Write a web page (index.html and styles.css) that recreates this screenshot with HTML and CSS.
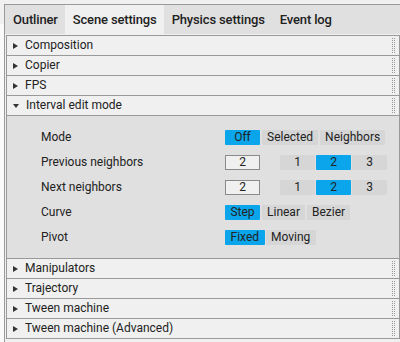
FILE: index.html
```html
<!DOCTYPE html>
<html>
<head>
<meta charset="utf-8">
<link rel="stylesheet" href="styles.css">
</head>
<body>
<div class="app">
  <div class="gutter"></div>
  <div class="frame">
    <div class="tabs">
      <div class="tab">Outliner</div>
      <div class="tab active">Scene settings</div>
      <div class="tab">Physics settings</div>
      <div class="tab">Event log</div>
    </div>
    <div class="panel">
      <div class="sec"><span class="tri"></span><span class="title">Composition</span><span class="grip"></span></div>
      <div class="sec"><span class="tri"></span><span class="title">Copier</span><span class="grip"></span></div>
      <div class="sec"><span class="tri"></span><span class="title">FPS</span><span class="grip"></span></div>
      <div class="sec"><span class="tri down"></span><span class="title">Interval edit mode</span><span class="grip"></span></div>
      <div class="body">
        <div class="label">Mode</div>
        <div class="seg">
          <span class="btn on">Off</span><span class="btn">Selected</span><span class="btn">Neighbors</span>
        </div>
        <div class="label">Previous neighbors</div>
        <div class="numrow">
          <span class="num">2</span>
          <div class="seg tight"><span class="btn">1</span><span class="btn on">2</span><span class="btn">3</span></div>
        </div>
        <div class="label">Next neighbors</div>
        <div class="numrow">
          <span class="num">2</span>
          <div class="seg tight"><span class="btn">1</span><span class="btn on">2</span><span class="btn">3</span></div>
        </div>
        <div class="label">Curve</div>
        <div class="seg">
          <span class="btn on">Step</span><span class="btn">Linear</span><span class="btn">Bezier</span>
        </div>
        <div class="label">Pivot</div>
        <div class="seg pivot">
          <span class="btn on">Fixed</span><span class="btn">Moving</span>
        </div>
      </div>
      <div class="sec"><span class="tri"></span><span class="title">Manipulators</span><span class="grip"></span></div>
      <div class="sec"><span class="tri"></span><span class="title">Trajectory</span><span class="grip"></span></div>
      <div class="sec"><span class="tri"></span><span class="title">Tween machine</span><span class="grip"></span></div>
      <div class="sec last"><span class="tri"></span><span class="title">Tween machine (Advanced)</span><span class="grip"></span></div>
    </div>
  </div>
</div>
</body>
</html>
```

FILE: styles.css
```css
* { box-sizing: border-box; }
html, body { margin: 0; padding: 0; }
body {
  background: #f0f0f0;
  font-family: Roboto, "Liberation Sans", sans-serif;
  color: #222;
  width: 400px;
  height: 342px;
  overflow: hidden;
}
.app { display: flex; padding-top: 4px; height: 342px; }
.gutter {
  width: 4px;
  margin-top: -4px;
  background: linear-gradient(#f0f0f0 24px, #fafafa 24px);
}
.frame {
  flex: 1;
  border-top: 1px solid #9a9a9a;
  border-left: 1px solid #9a9a9a;
  display: flex;
  flex-direction: column;
}
.tabs {
  display: flex;
  height: 29px;
  background: #e0e0e0;
}
.tab {
  padding: 0 7px 0 8px;
  font-size: 13px;
  font-weight: 500;
  letter-spacing: -0.15px;
  line-height: 29px;
  color: #222;
}
.tab.active { background: #f0f0f0; }
.panel {
  margin-top: 1px;
  margin-left: 1px;
  display: flex;
  flex-direction: column;
}
.sec {
  height: 20px;
  border: 1px solid #999;
  border-bottom: none;
  background: #f0f0f0;
  display: flex;
  align-items: center;
  padding-left: 6px;
  font-size: 12px;
}
.sec.last { height: 21px; border-bottom: 1px solid #999; }
.tri {
  width: 0; height: 0;
  border-top: 3px solid transparent;
  border-bottom: 3px solid transparent;
  border-left: 5px solid #333;
}
.tri.down {
  border-left: 3px solid transparent;
  border-right: 3px solid transparent;
  border-top: 4px solid #333;
  border-bottom: none;
}
.title { margin-left: 7px; flex: 1; line-height: 19px; }
.grip {
  width: 3px;
  height: 15px;
  margin-right: 4px;
  border-left: 1px dotted #999;
  border-right: 1px dotted #999;
}
.body {
  border: 1px solid #999;
  border-bottom: none;
  background: #e0e0e0;
  height: 143px;
  padding: 14px 0 0 34px;
  display: grid;
  grid-template-columns: 184px auto;
  grid-auto-rows: 15px;
  row-gap: 10px;
  font-size: 12px;
}
.label { line-height: 15px; }
.seg { display: flex; gap: 2px; }
.seg.tight { gap: 1px; margin-left: 20px; }
.seg.pivot { gap: 1px; }
.seg.pivot .btn { padding: 0 5.5px; }
.numrow { display: flex; }
.btn {
  height: 15px;
  min-width: 35px;
  padding: 0 5px;
  background: #d6d6d6;
  border-radius: 1px;
  line-height: 15px;
  text-align: center;
}
.btn.on { background: #0aa5ea; }
.num {
  width: 35px;
  height: 15px;
  border: 1px solid #8a8a8a;
  background: #f0f0f0;
  text-align: center;
  line-height: 13px;
}
```
